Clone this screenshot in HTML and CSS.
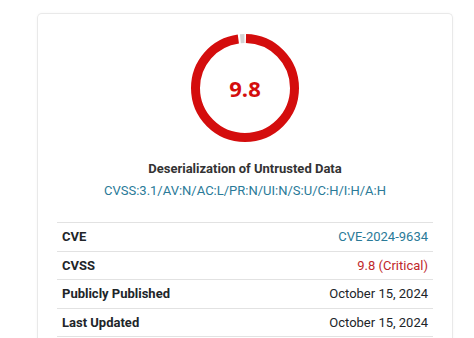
FILE: index.html
```html
<!DOCTYPE html>
<html lang="en">

<head>
    <meta charset="UTF-8">
    <meta name="viewport" content="width=device-width, initial-scale=1.0">
    <title>CVE-2024-9634</title>
    <link rel="stylesheet" href="styles.css">
</head>

<body>
    <div class="card">
        <div class="score">
            <svg class="donut" width="108" height="108" viewBox="0 0 108 108">
                <!-- 9.8 of 10, white gaps between the two segments -->
                <circle class="seg-main" cx="54" cy="54" r="49.5" stroke-dasharray="302.8 400" stroke-dashoffset="-1"></circle>
                <circle class="seg-rest" cx="54" cy="54" r="49.5" stroke-dasharray="4.2 400" stroke-dashoffset="-305.8"></circle>
            </svg>
            <span class="score-value">9.8</span>
        </div>

        <h2 class="title">Deserialization of Untrusted Data</h2>
        <a href="#" class="vector">CVSS:3.1/AV:N/AC:L/PR:N/UI:N/S:U/C:H/I:H/A:H</a>

        <table class="details">
            <tr>
                <th>CVE</th>
                <td><a href="#">CVE-2024-9634</a></td>
            </tr>
            <tr>
                <th>CVSS</th>
                <td class="critical">9.8 (Critical)</td>
            </tr>
            <tr>
                <th>Publicly Published</th>
                <td>October 15, 2024</td>
            </tr>
            <tr>
                <th>Last Updated</th>
                <td>October 15, 2024</td>
            </tr>
        </table>
    </div>
</body>

</html>
```

FILE: styles.css
```css
* {
    margin: 0;
    padding: 0;
    box-sizing: border-box;
}

body {
    font-family: Roboto, Arial, sans-serif;
    background-color: #fff;
    color: #212529;
}

.card {
    width: 416px;
    margin: 13px 0 0 37px;
    padding: 20px 19px 0;
    border: 1px solid #e9e9e9;
    border-bottom: none;
    border-radius: 5px 5px 0 0;
    box-shadow: 0 0 3px rgba(0, 0, 0, 0.04);
    display: flex;
    flex-direction: column;
    align-items: center;
    height: 330px;
}

.score {
    position: relative;
    width: 108px;
    height: 108px;
}

.donut {
    display: block;
    transform: rotate(-90deg);
}

.donut circle {
    fill: none;
    stroke-width: 9;
}

.seg-main {
    stroke: #d40d0d;
}

.seg-rest {
    stroke: #d3d3d3;
}

.score-value {
    position: absolute;
    inset: 0;
    display: flex;
    align-items: center;
    justify-content: center;
    font-family: "Open Sans", Arial, sans-serif;
    font-weight: 700;
    font-size: 22px;
    color: #d40d0d;
}

.title {
    margin-top: 17px;
    font-size: 13px;
    font-weight: 700;
    line-height: 20px;
    color: #333;
}

.vector {
    margin-top: 2px;
    font-size: 13px;
    line-height: 20px;
    color: #2a7a98;
    text-decoration: none;
}

.details {
    width: 100%;
    margin-top: 21px;
    border-collapse: collapse;
    font-size: 13px;
}

.details tr {
    border-top: 1px solid #e2e2e2;
    border-bottom: 1px solid #e2e2e2;
}

.details th,
.details td {
    height: 28.5px;
    padding: 0 5px;
}

.details th {
    text-align: left;
    font-weight: 700;
}

.details td {
    text-align: right;
}

.details a {
    color: #2a7a98;
    text-decoration: none;
}

.details .critical {
    color: #c0282b;
}
```
